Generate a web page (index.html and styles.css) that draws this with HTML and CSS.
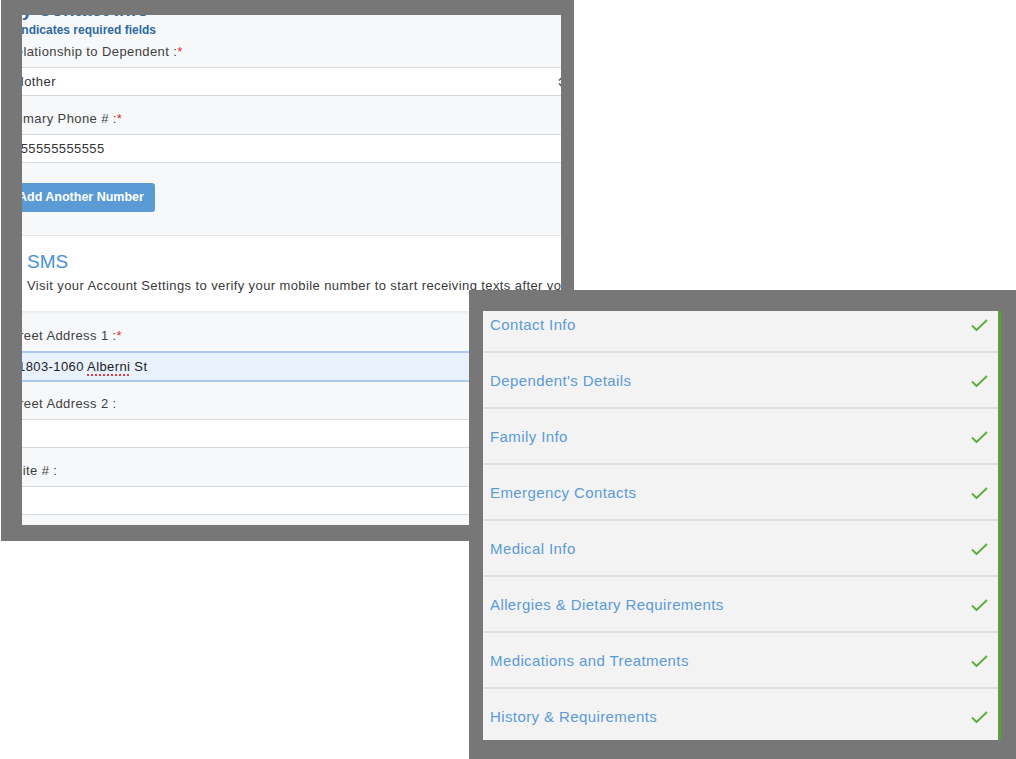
FILE: index.html
```html
<!DOCTYPE html>
<html lang="en">
<head>
    <meta charset="UTF-8">
    <meta name="viewport" content="width=device-width, initial-scale=1.0">
    <title>Contact Info</title>

    <link rel="stylesheet" href="styles.css">
</head>
<body>

<!-- left capture: contact form -->
<div class="shot shot-form">
    <div class="viewport">
        <div class="form">
            <h1 class="title">My Contact Info</h1>
            <p class="req"><span class="star">*</span> indicates required fields</p>

            <div class="field first">
                <label>Relationship to Dependent :<span class="star">*</span></label>
                <div class="input select">Mother
                    <svg class="arrows" width="8" height="12" viewBox="0 0 8 12"><path d="M1 4.5 4 1.5 7 4.5M1 7.5 4 10.5 7 7.5" fill="none" stroke="#555" stroke-width="1.4"/></svg>
                </div>
            </div>
            <div class="field">
                <label>Primary Phone # :<span class="star">*</span></label>
                <div class="input">555555555555</div>
            </div>

            <div class="actions">
                <span class="btn">Add Another Number</span>
            </div>

            <div class="sms">
                <h2>SMS</h2>
                <p>Visit your Account Settings to verify your mobile number to start receiving texts after you</p>
            </div>

            <div class="field addr1">
                <label>Street Address 1 :<span class="star">*</span></label>
                <div class="input focus">1803-1060 <span class="typo">Alberni</span> St</div>
            </div>
            <div class="field addr2">
                <label>Street Address 2 :</label>
                <div class="input"></div>
            </div>
            <div class="field">
                <label>Suite # :</label>
                <div class="input"></div>
            </div>
        </div>
    </div>
</div>

<!-- right capture: completed steps -->
<div class="shot shot-steps">
    <div class="viewport">
        <ul class="steps">
            <li class="step"><span>Contact Info</span><svg class="check" width="17" height="12" viewBox="0 0 17 12"><path d="M1 6.5 5.5 11 16 1" fill="none" stroke="#5fac3f" stroke-width="2"/></svg></li>
            <li class="step"><span>Dependent's Details</span><svg class="check" width="17" height="12" viewBox="0 0 17 12"><path d="M1 6.5 5.5 11 16 1" fill="none" stroke="#5fac3f" stroke-width="2"/></svg></li>
            <li class="step"><span>Family Info</span><svg class="check" width="17" height="12" viewBox="0 0 17 12"><path d="M1 6.5 5.5 11 16 1" fill="none" stroke="#5fac3f" stroke-width="2"/></svg></li>
            <li class="step"><span>Emergency Contacts</span><svg class="check" width="17" height="12" viewBox="0 0 17 12"><path d="M1 6.5 5.5 11 16 1" fill="none" stroke="#5fac3f" stroke-width="2"/></svg></li>
            <li class="step"><span>Medical Info</span><svg class="check" width="17" height="12" viewBox="0 0 17 12"><path d="M1 6.5 5.5 11 16 1" fill="none" stroke="#5fac3f" stroke-width="2"/></svg></li>
            <li class="step"><span>Allergies &amp; Dietary Requirements</span><svg class="check" width="17" height="12" viewBox="0 0 17 12"><path d="M1 6.5 5.5 11 16 1" fill="none" stroke="#5fac3f" stroke-width="2"/></svg></li>
            <li class="step"><span>Medications and Treatments</span><svg class="check" width="17" height="12" viewBox="0 0 17 12"><path d="M1 6.5 5.5 11 16 1" fill="none" stroke="#5fac3f" stroke-width="2"/></svg></li>
            <li class="step"><span>History &amp; Requirements</span><svg class="check" width="17" height="12" viewBox="0 0 17 12"><path d="M1 6.5 5.5 11 16 1" fill="none" stroke="#5fac3f" stroke-width="2"/></svg></li>
        </ul>
    </div>
</div>

</body>
</html>
```

FILE: styles.css
```css
/* Page */
body {
    margin: 0;
    width: 1016px;
    height: 759px;
    overflow: hidden;
    position: relative;
    background: #fff;
    font-family: "Liberation Sans", Arial, sans-serif;
}

/* Gray framed captures */
.shot {
    position: absolute;
    background: #777;
}
.shot .viewport {
    overflow: hidden;
}

/* Left: form */
.shot-form {
    left: 1px;
    top: 0;
    padding: 15px 13px 16px 21px;
}
.shot-form .viewport {
    width: 539px;
    height: 510px;
    background: #f7f8fa;
}
.form {
    margin-left: -20px;
    width: 568px;
}
.title {
    margin: -17px 0 0;
    padding-left: 4px;
    font-size: 19px;
    line-height: 24px;
    font-weight: bold;
    color: #2f6aa3;
}
.req {
    margin: 0;
    padding-left: 8px;
    font-size: 12px;
    line-height: 16px;
    font-weight: bold;
    color: #2d6aa0;
}
.star {
    color: #e02d2d;
}
.field {
    padding-top: 14px;
}
.field.first {
    padding-top: 5px;
}
.field.addr1 {
    padding-top: 16px;
}
.field.addr2 {
    padding-top: 13px;
}
.field label {
    display: block;
    padding-left: 4px;
    margin-bottom: 6px;
    font-size: 13px;
    line-height: 18px;
    letter-spacing: 0.4px;
    color: #404040;
}
.input {
    position: relative;
    height: 27px;
    padding-left: 11px;
    border-top: 1px solid #d6d9dd;
    border-bottom: 1px solid #d6d9dd;
    background: #fff;
    font-size: 13px;
    line-height: 27px;
    letter-spacing: 0.4px;
    color: #333;
}
.input.focus {
    padding-left: 16px;
    border-top: 2px solid #a9c8f2;
    border-bottom: 2px solid #a9c8f2;
    background: #e9f1fd;
    color: #222;
}
.typo {
    text-decoration: underline dotted #e23b3b;
    text-decoration-thickness: 2px;
    text-underline-offset: 3px;
}
.arrows {
    position: absolute;
    right: 4px;
    top: 8px;
}
.actions {
    padding: 20px 0 23px;
}
.btn {
    display: inline-block;
    height: 29px;
    margin-left: 5px;
    padding: 0 11px;
    border-radius: 3px;
    background: #5b9bd5;
    color: #fff;
    font-size: 12.5px;
    line-height: 29px;
    font-weight: bold;
}
.sms {
    padding: 14px 0 16px 25px;
    border-top: 1px solid #e4e6e9;
    background: #fff;
    box-shadow: 0 2px 3px rgba(0, 0, 0, 0.06);
}
.sms h2 {
    margin: 0;
    font-size: 19px;
    line-height: 24px;
    font-weight: normal;
    color: #4a90d9;
}
.sms p {
    margin: 3px 0 0;
    font-size: 13px;
    line-height: 18px;
    letter-spacing: 0.4px;
    color: #3a3a3a;
    white-space: nowrap;
}

/* Right: step list */
.shot-steps {
    left: 469px;
    top: 290px;
    padding: 21px 15px 19px 14px;
}
.shot-steps .viewport {
    width: 518px;
    height: 429px;
    background: #f3f3f3;
}
.steps {
    list-style: none;
    margin: -14px 0 0;
    padding: 0;
    border-right: 3px solid #58a336;
}
.step {
    display: flex;
    align-items: center;
    justify-content: space-between;
    box-sizing: border-box;
    height: 56px;
    padding: 1px 10px 0 7px;
    border-bottom: 2px solid #dedede;
    font-size: 15px;
    letter-spacing: 0.4px;
    color: #5a9bd6;
}
```
